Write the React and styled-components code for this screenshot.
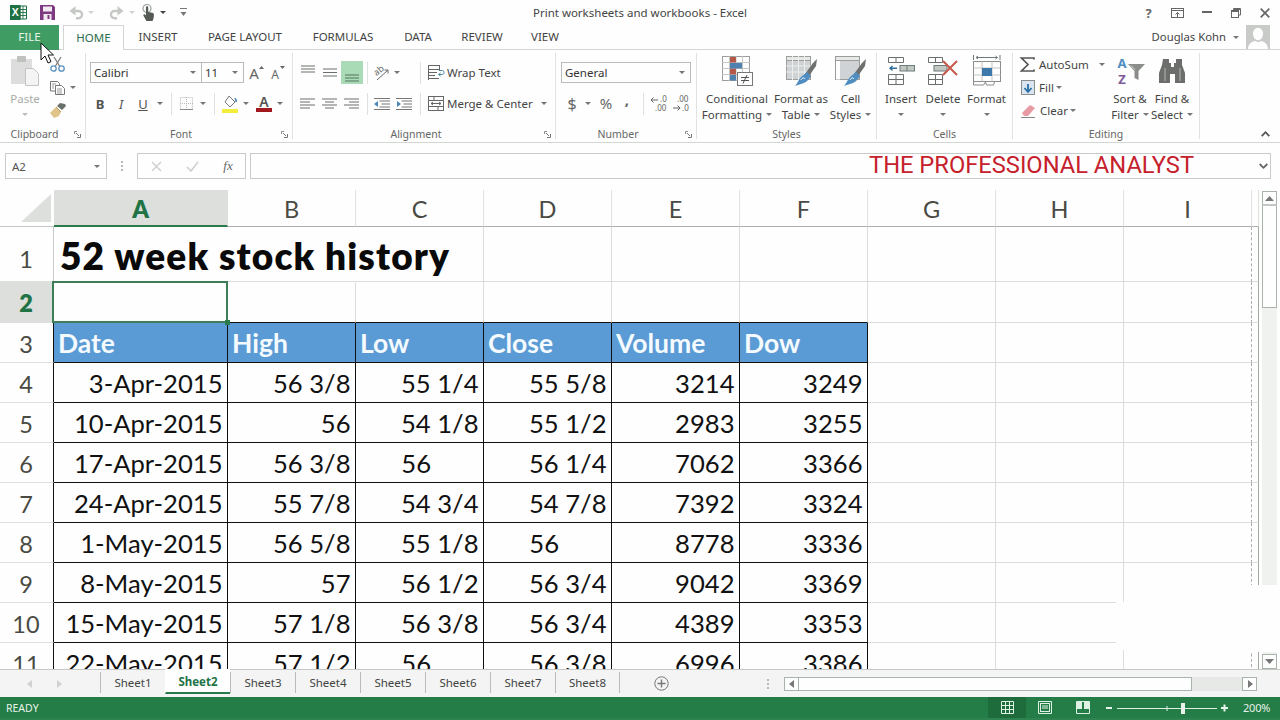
import React from 'react';
import styled, { createGlobalStyle } from 'styled-components';

const PAGE = '#fdfefd';
const UI = '"Noto Sans", "Open Sans", sans-serif';
const CELL = 'Lato, "Open Sans", sans-serif';

const Global = createGlobalStyle`
  html, body { margin: 0; padding: 0; background: ${PAGE}; }
  #root { width: 1280px; height: 720px; overflow: hidden; }
  * { box-sizing: border-box; }
`;

const Window = styled.div`
  position: relative;
  width: 1280px;
  height: 720px;
  display: flex;
  flex-direction: column;
  overflow: hidden;
  background: ${PAGE};
  color: #444;
  font-family: ${UI};
  font-size: 11.5px;
`;

/* ---------- shared bits ---------- */
const Svg = styled.svg`
  display: block;
  flex: none;
  overflow: visible;
`;
const Slot = styled.span`
  flex: none;
  display: flex;
  align-items: center;
  justify-content: center;
  width: ${(p) => p.$w}px;
  height: 100%;
`;
const Caret = styled.span`
  flex: none;
  display: inline-block;
  width: 0;
  height: 0;
  border-left: 3px solid transparent;
  border-right: 3px solid transparent;
  border-top: 3px solid ${(p) => p.$c || '#777'};
`;
const Sep = styled.span`
  flex: none;
  display: block;
  width: 1px;
  height: 22px;
  background: #dfe1df;
`;

/* ---------- title bar ---------- */
const TitleBar = styled.header`
  flex: none;
  height: 25px;
  display: flex;
  align-items: center;
`;
const Qat = styled.div`
  flex: none;
  width: 320px;
  height: 100%;
  display: flex;
  align-items: center;
  padding-left: 8px;
`;
const DocTitle = styled.div`
  flex: 1;
  text-align: center;
  font-size: 11.5px;
  color: #444;
  padding-bottom: 1px;
`;
const WinControls = styled.div`
  flex: none;
  width: 320px;
  height: 100%;
  display: flex;
  align-items: center;
  justify-content: flex-end;
`;
const Help = styled.span`
  font-weight: 700;
  font-size: 13px;
  color: #666;
`;

/* ---------- tabs ---------- */
const TabRow = styled.nav`
  flex: none;
  height: 25px;
  display: flex;
  align-items: stretch;
  border-bottom: 1px solid #d4d6d4;
`;
const FileTab = styled.div`
  flex: none;
  width: 59px;
  height: 25px;
  display: flex;
  align-items: center;
  justify-content: center;
  padding-bottom: 2px;
  background: #3f9c62;
  color: #e9f5ec;
  font-size: 11.5px;
`;
const RibbonTab = styled.div`
  flex: none;
  width: ${(p) => p.$w}px;
  height: ${(p) => (p.$active ? 25 : 24)}px;
  margin-left: ${(p) => p.$ml || 0}px;
  display: flex;
  align-items: center;
  justify-content: center;
  padding-bottom: 2px;
  font-size: 11.5px;
  color: ${(p) => (p.$active ? '#2f6f4e' : '#444')};
  background: ${PAGE};
  ${(p) => p.$active && 'border: 1px solid #d4d6d4; border-bottom: 0;'}
`;
const User = styled.div`
  margin-left: auto;
  display: flex;
  align-items: center;
  height: 24px;
  padding-right: 10px;
  font-size: 11.3px;
`;
const UserName = styled.span`
  margin-right: 7px;
  padding-bottom: 1px;
`;
const Avatar = styled.span`
  display: block;
  width: 24px;
  height: 24px;
  margin-left: 7px;
  background: #c9cbc9;
`;

/* ---------- ribbon ---------- */
const Ribbon = styled.section`
  flex: none;
  height: 93px;
  display: flex;
  align-items: flex-start;
  padding-top: 3px;
  border-bottom: 1px solid #d4d6d4;
`;
const Group = styled.div`
  flex: none;
  width: ${(p) => p.$w}px;
  height: 86px;
  display: flex;
  flex-direction: column;
  border-right: 1px solid #e1e3e1;
`;
const GroupBody = styled.div`
  flex: 1;
  min-height: 0;
  display: flex;
  align-items: flex-start;
`;
const GroupFoot = styled.div`
  flex: none;
  height: 12px;
  display: grid;
  grid-template-columns: 1fr auto 1fr;
  align-items: start;
  font-size: 10.5px;
  line-height: 14px;
  color: #666;
  padding-right: ${(p) => p.$pr || 0}px;
`;
const FootLabel = styled.span`
  grid-column: 2;
`;
const Launcher = styled.span`
  grid-column: 3;
  justify-self: end;
  display: block;
  margin-top: 4px;
  margin-right: ${(p) => p.$mr}px;
`;
const Rows = styled.div`
  display: flex;
  flex-direction: column;
  gap: 10px;
  padding-top: 9px;
  padding-left: ${(p) => p.$pl || 0}px;
`;
const Row = styled.div`
  display: flex;
  align-items: center;
  height: 21px;
`;
const Combo = styled.div`
  flex: none;
  width: ${(p) => p.$w}px;
  height: 21px;
  margin-left: ${(p) => p.$ml ?? 0}px;
  display: flex;
  align-items: center;
  justify-content: space-between;
  padding: 0 5px 0 3px;
  border: 1px solid #b9bdb9;
  background: ${PAGE};
  font-size: 11.5px;
  color: #333;
`;
const Letter = styled.span`
  font-family: ${UI};
  font-weight: ${(p) => (p.$b ? 700 : 400)};
  font-style: ${(p) => (p.$i ? 'italic' : 'normal')};
  text-decoration: ${(p) => (p.$u ? 'underline' : 'none')};
  font-size: 13px;
  color: #555;
`;
const ActiveAlign = styled.span`
  flex: none;
  width: 22px;
  height: 23px;
  display: flex;
  align-items: flex-end;
  justify-content: center;
  padding-bottom: 2px;
  background: #a9dcb6;
`;
const TextBtn = styled.span`
  flex: none;
  font-size: 11.5px;
  color: #444;
  margin-left: ${(p) => p.$ml || 0}px;
  width: ${(p) => (p.$w ? `${p.$w}px` : 'auto')};
`;
const Symbol = styled.span`
  font-size: ${(p) => p.$s || 15}px;
  font-weight: ${(p) => (p.$raise ? 700 : 400)};
  color: #666;
  line-height: 1;
  padding-bottom: ${(p) => (p.$raise ? 9 : 0)}px;
`;
const Big = styled.div`
  flex: none;
  width: ${(p) => p.$w}px;
  display: flex;
  flex-direction: column;
  align-items: center;
  white-space: nowrap;
  color: ${(p) => (p.$dim ? '#a9aca9' : '#444')};
`;
const BigIcon = styled.div`
  height: 37px;
  padding-bottom: 2px;
  display: flex;
  align-items: center;
  justify-content: center;
`;
const BigLine = styled.div`
  height: 16px;
  display: flex;
  align-items: center;
  justify-content: center;
  gap: 4px;
  font-size: 11.5px;
`;
const Mini = styled.div`
  flex: none;
  display: flex;
  flex-direction: column;
  width: ${(p) => p.$w}px;
`;
const MiniRow = styled.div`
  height: 23px;
  display: flex;
  align-items: center;
  padding-left: ${(p) => p.$pl || 0}px;
`;
const Collapse = styled.div`
  flex: none;
  width: 9px;
  height: 6px;
  margin-left: auto;
  margin-right: 10px;
  margin-top: 78px;
`;

/* ---------- formula bar ---------- */
const FormulaBar = styled.div`
  flex: none;
  height: 26px;
  margin-top: 10px;
  padding: 0 9px 0 5px;
  display: flex;
  align-items: stretch;
`;
const NameBox = styled.div`
  flex: none;
  width: 102px;
  display: flex;
  align-items: center;
  justify-content: space-between;
  padding: 0 6px;
  border: 1px solid #c8cbc8;
  font-size: 11.5px;
  color: #555;
`;
const Grip = styled.div`
  flex: none;
  width: 30px;
  display: flex;
  flex-direction: column;
  align-items: center;
  justify-content: center;
  gap: 2px;
`;
const GripDot = styled.span`
  width: 2px;
  height: 2px;
  background: #b5b8b5;
`;
const FxButtons = styled.div`
  flex: none;
  width: 109px;
  display: flex;
  align-items: center;
  border: 1px solid #c8cbc8;
`;
const FxText = styled.span`
  font-family: "Liberation Serif", serif;
  font-style: italic;
  font-size: 13px;
  color: #666;
`;
const FormulaInput = styled.div`
  flex: 1;
  margin-left: 4px;
  display: flex;
  align-items: center;
  justify-content: space-between;
  padding: 0 2px 0 618px;
  border: 1px solid #c8cbc8;
`;
const Brand = styled.span`
  font-family: Roboto, sans-serif;
  font-size: 23.7px;
  color: #c6202c;
  white-space: nowrap;
  padding-bottom: 2px;
`;

/* ---------- sheet ---------- */
const SheetArea = styled.div`
  flex: none;
  height: 479px;
  margin-top: 11px;
  display: flex;
`;
const Grid = styled.div`
  flex: none;
  width: 1259px;
  height: 479px;
  overflow: hidden;
  display: grid;
  grid-template-columns: 54px 174px repeat(8, 128px) 7px;
  grid-template-rows: 37px 55px 41px repeat(9, 40px);
  align-content: start;
`;
const Corner = styled.div`
  display: flex;
  align-items: flex-end;
  justify-content: flex-end;
  padding: 0 3px 4px 0;
  border-bottom: 1px solid #c3c7c3;
`;
const ColHead = styled.div`
  display: flex;
  align-items: center;
  justify-content: center;
  padding-top: 2px;
  font-family: ${CELL};
  font-size: 23.5px;
  color: ${(p) => (p.$on ? '#217346' : '#4a4a44')};
  font-weight: ${(p) => (p.$on ? 800 : 400)};
  background: ${(p) => (p.$on ? '#dcdfdc' : 'transparent')};
  border-right: 1px solid ${(p) => (p.$on ? '#dcdfdc' : '#dfe1df')};
  border-bottom: ${(p) => (p.$on ? '2px solid #2a7b4c' : '1px solid #aab0aa')};
`;
const RowHead = styled.div`
  display: flex;
  align-items: center;
  justify-content: center;
  padding-top: ${(p) => p.$pt ?? 2}px;
  padding-right: 1px;
  font-family: ${CELL};
  font-size: 23.5px;
  color: ${(p) => (p.$on ? '#217346' : '#4a4a44')};
  font-weight: ${(p) => (p.$on ? 800 : 400)};
  background: ${(p) => (p.$on ? '#dcdfdc' : 'transparent')};
  border-right: 1px solid ${(p) => (p.$table ? '#111' : p.$on ? '#2a7b4c' : '#c8cbc8')};
  border-bottom: 1px solid ${(p) => (p.$on ? '#dcdfdc' : '#dfe1df')};
`;
const rightBorder = (p) => {
  if (p.$open) return '1px solid transparent';
  if (p.$dash) return '1px dashed #a9ada9';
  if (p.$edge) return '1px solid #a3a8a3';
  return `1px solid ${p.$table ? '#111' : '#dcdedc'}`;
};
const Cell = styled.div`
  position: relative;
  display: flex;
  align-items: center;
  justify-content: ${(p) => (p.$left ? 'flex-start' : 'flex-end')};
  padding: ${(p) => (p.$left ? '0 0 0 5px' : `0 ${p.$pr || 4.5}px 0 0`)};
  font-family: ${CELL};
  font-size: 25.6px;
  color: #111;
  white-space: nowrap;
  border-right: ${rightBorder};
  border-bottom: 1px solid ${(p) => (p.$table || p.$above ? '#111' : '#dcdedc')};
`;
const HeaderCell = styled(Cell)`
  background: #5b9bd5;
  color: #f4fafd;
  font-weight: 700;
  font-size: 26.5px;
  padding-left: 4px;
`;
const TitleCell = styled(Cell)`
  font-weight: 800;
  font-size: 37px;
  color: #0a0a0a;
  letter-spacing: 1.15px;
  padding: 3px 0 0 6px;
`;
const Selection = styled.div`
  position: absolute;
  left: -2px;
  top: -1px;
  right: -1px;
  bottom: -1px;
  border: 2px solid #3d7d58;
  z-index: 2;
`;
const Handle = styled.span`
  position: absolute;
  right: -4px;
  bottom: -4px;
  width: 5px;
  height: 5px;
  background: #2a7b4c;
`;
const VScroll = styled.aside`
  flex: 1;
  display: flex;
  flex-direction: column;
  padding: 1px 3px 0 3px;
`;
const VBtn = styled.div`
  flex: none;
  height: ${(p) => p.$h}px;
  display: flex;
  align-items: center;
  justify-content: center;
  border: 1px solid #a9b3a9;
  ${(p) => (p.$top ? 'border-bottom: 2px solid #c3c7c3;' : '')}
`;
const VThumb = styled.div`
  flex: none;
  height: 102px;
  border: 1px solid #a9b3a9;
  border-top: 0;
  background: ${PAGE};
`;
const VTrack = styled.div`
  flex: 1;
  background: #f0f2f0;
`;

/* ---------- sheet tabs ---------- */
const Strip = styled.div`
  flex: none;
  height: 28px;
  display: flex;
  align-items: flex-start;
  background: #f3f4f3;
  border-top: 1px solid #c5c8c5;
`;
const StripNav = styled.div`
  flex: none;
  width: 100px;
  height: 100%;
  display: flex;
  align-items: center;
  padding-left: 27px;
  gap: 23px;
`;
const SheetTab = styled.div`
  flex: none;
  width: 65px;
  height: ${(p) => (p.$on ? 25 : 21)}px;
  margin-top: ${(p) => (p.$on ? -1 : 2)}px;
  padding-top: ${(p) => (p.$on ? 2 : 0)}px;
  display: flex;
  align-items: center;
  justify-content: center;
  font-size: 11.5px;
  color: ${(p) => (p.$on ? '#217346' : '#444')};
  font-weight: ${(p) => (p.$on ? 700 : 400)};
  background: ${(p) => (p.$on ? PAGE : 'transparent')};
  border-left: 1px solid ${(p) => (p.$on ? 'transparent' : '#b9bdb9')};
  border-bottom: ${(p) => (p.$on ? '2px solid #2a7b4c' : '0')};
  ${(p) => p.$last && 'border-right: 1px solid #b9bdb9;'}
`;
const PlusSlot = styled(Slot)`
  width: 82px;
`;
const StripGrip = styled.span`
  flex: none;
  width: 72px;
  height: 100%;
  display: flex;
  flex-direction: column;
  gap: 2px;
  align-items: flex-end;
  justify-content: center;
  padding-right: 5px;
`;
const HScroll = styled.div`
  flex: none;
  width: 473px;
  height: 14px;
  margin-top: 7px;
  margin-left: 10px;
  display: flex;
  align-items: stretch;
  background: #e7e9e7;
`;
const HBtn = styled.div`
  flex: none;
  width: 15px;
  display: flex;
  align-items: center;
  justify-content: center;
  background: ${PAGE};
  border: 1px solid #a9b3a9;
`;
const HThumb = styled.div`
  flex: none;
  width: 393px;
  background: ${PAGE};
  border: 1px solid #a9b3a9;
  border-left: 0;
`;
const HTrack = styled.div`
  flex: 1;
`;

/* ---------- status bar ---------- */
const Status = styled.footer`
  flex: none;
  height: 23px;
  display: flex;
  align-items: center;
  background: #247c46;
  color: #e6f2ea;
  font-size: 10.5px;
  padding-left: 6px;
  border-bottom: 2px solid #2e8350;
`;
const StatusText = styled.span`
  flex: none;
  width: 982px;
`;
const ViewBtn = styled.div`
  flex: none;
  width: ${(p) => p.$w}px;
  height: 100%;
  display: flex;
  align-items: center;
  justify-content: center;
  background: ${(p) => (p.$on ? '#1e6b3c' : 'transparent')};
`;
const Zoom = styled.div`
  flex: none;
  height: 100%;
  display: flex;
  align-items: center;
  margin-left: 4px;
`;
const Percent = styled.span`
  flex: none;
  margin-left: 15px;
  width: 37px;
  letter-spacing: -0.2px;
  font-size: 11px;
`;

/* ---------- overlays ---------- */
const Blotch = styled.div`
  position: absolute;
  left: ${(p) => p.$x}px;
  top: ${(p) => p.$y}px;
  width: ${(p) => p.$w}px;
  height: ${(p) => p.$h}px;
  background: ${PAGE};
  z-index: 3;
`;
const Pointer = styled.div`
  position: absolute;
  left: 40px;
  top: 42px;
  z-index: 5;
`;

/* ---------- icons ---------- */
const Lines = ({ ys, xs, c = '#6b6f6b', w = 16, h = 12 }) => (
  <Svg width={w} height={h} viewBox={`0 0 ${w} ${h}`}>
    {ys.map((y, i) => (
      <line key={i} x1={xs[i][0]} x2={xs[i][1]} y1={y} y2={y} stroke={c} strokeWidth="1" />
    ))}
  </Svg>
);
const LauncherIcon = () => (
  <Svg width="7" height="7" viewBox="0 0 7 7">
    <path d="M.5 3V.5H3" fill="none" stroke="#8a8d8a" />
    <path d="M2 2l3 3M6.500 3v3.500H3" fill="none" stroke="#777" />
  </Svg>
);
const Tri = ({ dir, c = '#777' }) => (
  <Svg width="6" height="8" viewBox="0 0 6 8">
    {dir === 'l' ? <path d="M5 0v8L0 4z" fill={c} /> : <path d="M1 0v8l5-4z" fill={c} />}
  </Svg>
);
const PlainCaretUp = ({ c = '#777' }) => (
  <Svg width="9" height="5" viewBox="0 0 9 5"><path d="M0 5l4.500-5L9 5z" fill={c} /></Svg>
);
const PlainCaretDown = ({ c = '#777' }) => (
  <Svg width="9" height="5" viewBox="0 0 9 5"><path d="M0 0l4.500 5L9 0z" fill={c} /></Svg>
);

const XlLogo = () => (
  <Svg width="17" height="17" viewBox="0 0 17 17">
    <path d="M7 2h9.500v13H7z" fill="#fff" stroke="#1e7145" />
    <path d="M10 2v13M13 2v13M7 5.500h9.500M7 8.500h9.500M7 11.500h9.500" stroke="#1e7145" strokeWidth=".9" />
    <rect x="0" y="1" width="10.500" height="15" fill="#1e7145" />
    <text x="5.200" y="12.200" fontFamily="Liberation Sans" fontWeight="700" fontSize="10.500" fill="#fff" textAnchor="middle">X</text>
  </Svg>
);
const SaveIcon = () => (
  <Svg width="15" height="15" viewBox="0 0 15 15">
    <path d="M0 0h13l2 2v13H0z" fill="#7e3a80" />
    <rect x="3" y="1.500" width="9" height="5" fill="#f2e9f2" />
    <rect x="3.500" y="9" width="8" height="6" fill="#f2e9f2" />
    <rect x="7.500" y="10" width="2" height="4" fill="#7e3a80" />
  </Svg>
);
const UndoIcon = ({ flip }) => (
  <Svg width="15" height="13" viewBox="0 0 15 13">
    <g transform={flip ? 'matrix(-1 0 0 1 15 0)' : undefined}>
      <path d="M3 5h6.500a3.600 3.600 0 0 1 0 7.200H7" fill="none" stroke="#c5c8c5" strokeWidth="2.400" />
      <path d="M6.500 0v9.500L.5 5z" fill="#c5c8c5" />
    </g>
  </Svg>
);
const TouchIcon = () => (
  <Svg width="13" height="18" viewBox="0 0 13 18">
    <circle cx="5" cy="4.500" r="4" fill="none" stroke="#9aa09a" strokeWidth="1.200" />
    <path d="M4 3.200c0-1.400 2.200-1.400 2.200 0V8l4 .8c1.300.3 1.700 1 1.700 2.200 0 2.400-.6 4.200-1.400 6H4.400L1.500 11.800c-.7-1.200.7-2.200 1.600-1.200L4 11.600z" fill="#555a55" />
  </Svg>
);
const QatMore = () => (
  <Svg width="7" height="9" viewBox="0 0 7 9">
    <path d="M0 .5h7" stroke="#777" />
    <path d="M.5 4h6L3.500 8z" fill="#777" />
  </Svg>
);
const RibbonOpts = () => (
  <Svg width="13" height="10" viewBox="0 0 13 10">
    <rect x=".5" y=".5" width="12" height="9" fill="none" stroke="#666" />
    <path d="M.5 2.500h12" stroke="#666" />
    <path d="M6.500 9V4.500M4.500 6.500l2-2 2 2" fill="none" stroke="#666" />
  </Svg>
);
const MinIcon = () => (
  <Svg width="10" height="3" viewBox="0 0 10 3"><rect y="0" width="10" height="2" fill="#666" /></Svg>
);
const RestoreIcon = () => (
  <Svg width="10" height="10" viewBox="0 0 10 10">
    <path d="M2.500 2.500V.5h7v6.500H7.500" fill="none" stroke="#666" />
    <rect x=".5" y="2.500" width="7" height="7" fill={PAGE} stroke="#666" />
    <path d="M.5 3.500h7M2.500 1.500h7" stroke="#666" />
  </Svg>
);
const CloseIcon = () => (
  <Svg width="10" height="10" viewBox="0 0 10 10">
    <path d="M.7.7l8.600 8.600M9.300.7L.7 9.300" stroke="#666" strokeWidth="1.700" />
  </Svg>
);
const AvatarArt = () => (
  <Svg width="24" height="24" viewBox="0 0 24 24">
    <ellipse cx="12" cy="9" rx="5" ry="6.200" fill={PAGE} />
    <path d="M2 24c0-5 4-7.500 7-8 2 1.400 4 1.400 6 0 3 .5 7 3 7 8z" fill={PAGE} />
  </Svg>
);
const PasteIcon = () => (
  <Svg width="29" height="30" viewBox="0 0 29 30">
    <rect x="0" y="3" width="21" height="25" fill="#dcdddc" />
    <rect x="6" y="0" width="9" height="6" rx="1" fill="#bfc1bf" />
    <path d="M14.500 12.500h8l5 5v12h-13z" fill="#f3f4f3" stroke="#c3c5c3" />
  </Svg>
);
const CutIcon = () => (
  <Svg width="15" height="15" viewBox="0 0 15 15">
    <path d="M4 0l5.500 9M11 0L5.500 9" stroke="#7b7e7b" strokeWidth="1.300" />
    <circle cx="3.500" cy="11.500" r="2.700" fill="none" stroke="#5a8ec0" strokeWidth="1.300" />
    <circle cx="11.500" cy="11.500" r="2.700" fill="none" stroke="#5a8ec0" strokeWidth="1.300" />
  </Svg>
);
const CopyIcon = () => (
  <Svg width="15" height="14" viewBox="0 0 15 14">
    <path d="M.5.500h7l2 2V10H.5z" fill={PAGE} stroke="#777" />
    <path d="M5.500 4.500h6l3 3v6h-9z" fill={PAGE} stroke="#777" />
    <path d="M2 3h4M2 5h2M2 7h2M7 8h5M7 10h5M7 12h5" stroke="#999" />
  </Svg>
);
const BrushIcon = () => (
  <Svg width="16" height="15" viewBox="0 0 16 15">
    <path d="M0 10l6-6 5 5-2 4-5 2z" fill="#e0c58a" />
    <path d="M7 3l3-3 5 1 1 2-3 3-1 1z" fill="#6b6f6b" />
    <path d="M6 4l5 5" stroke="#b6975c" />
  </Svg>
);
const GrowA = ({ big }) => (
  <Svg width="18" height="16" viewBox="0 0 18 16">
    <text x="7" y="14" textAnchor="middle" fontFamily={UI} fontSize={big ? 15 : 12} fill="#666">A</text>
    <path d={big ? 'M12 4l2.500-3L17 4z' : 'M12 1l2.500 3L17 1z'} fill="#666" />
  </Svg>
);
const BordersIcon = () => (
  <Svg width="13" height="13" viewBox="0 0 13 13">
    <rect x=".5" y=".5" width="12" height="12" fill="none" stroke="#bbb" strokeDasharray="1 1" />
    <path d="M6.500 0v13M0 6.500h13" stroke="#bbb" strokeDasharray="1 1" />
    <path d="M0 12.500h13" stroke="#888" />
  </Svg>
);
const FillIcon = () => (
  <Svg width="16" height="18" viewBox="0 0 16 18">
    <path d="M7 1l6 6-5 5-5-5z" fill={PAGE} stroke="#777" />
    <path d="M13 3c2 2 2 4 1 4z" fill="#4a86b8" stroke="#4a86b8" />
    <rect x="0" y="14" width="16" height="4" fill="#f3ee3d" />
  </Svg>
);
const ColorA = () => (
  <Svg width="16" height="17" viewBox="0 0 16 17">
    <text x="8" y="12" textAnchor="middle" fontFamily={UI} fontWeight="600" fontSize="14" fill="#555">A</text>
    <rect x="0" y="13" width="16" height="4" fill="#a3171f" />
  </Svg>
);
const Orient = () => (
  <Svg width="16" height="16" viewBox="0 0 16 16">
    <text x="0" y="9" fontFamily={UI} fontSize="9" fill="#666" transform="rotate(-40 4 8)">ab</text>
    <path d="M2 15L13 5M13 5h-3.500M13 5v3.500" fill="none" stroke="#666" />
  </Svg>
);
const Indent = ({ out }) => (
  <Svg width="16" height="12" viewBox="0 0 16 12">
    <path d="M5.500 3H16M7.500 6H16M5.500 9H16M0 .5h16M0 11.500h16" stroke="#777" />
    {out ? <path d="M0 6l4-3v6z" fill="#4a86b8" /> : <path d="M5 6L1 3v6z" fill="#4a86b8" />}
  </Svg>
);
const WrapIcon = () => (
  <Svg width="17" height="16" viewBox="0 0 17 16">
    <rect x=".5" y=".5" width="11" height="4" fill="none" stroke="#666" />
    <path d="M0 7.500h9M0 10.500h7M0 13.500h11M.5 5v10" stroke="#666" />
    <path d="M11 5.500h3.500c2 0 2 4 0 4H11M12.500 8l-2 1.500 2 1.500" fill="none" stroke="#4a86a0" />
  </Svg>
);
const MergeIcon = () => (
  <Svg width="16" height="15" viewBox="0 0 16 15">
    <rect x=".5" y=".5" width="15" height="14" fill="none" stroke="#666" />
    <path d="M.5 4.500h15M.5 10.500h15M6 .5v4M10 10.500v4" stroke="#666" />
    <path d="M3 7.500h10M3 7.500l2-1.500M3 7.500L5 9M13 7.500L11 6M13 7.500L11 9" fill="none" stroke="#666" />
  </Svg>
);
const Decimal = ({ inc }) => (
  <Svg width="18" height="16" viewBox="0 0 18 16" fontFamily={UI}>
    {inc ? (
      <>
        <path d="M8 4H1M3.500 1.500L1 4l2.500 2.500" fill="none" stroke="#666" />
        <text x="10" y="6" fontSize="8" fill="#666">.0</text>
        <text x="5" y="15" fontSize="8" fill="#666">.00</text>
      </>
    ) : (
      <>
        <text x="5" y="6" fontSize="8" fill="#666">.00</text>
        <path d="M1 12h7M5.500 9.500L8 12l-2.500 2.500" fill="none" stroke="#666" />
        <text x="10" y="15" fontSize="8" fill="#666">.0</text>
      </>
    )}
  </Svg>
);
const CondIcon = () => (
  <Svg width="31" height="30" viewBox="0 0 31 30">
    <rect x=".5" y=".5" width="27" height="24" fill={PAGE} stroke="#9a9d9a" />
    <path d="M7.500 0v25M20.500 0v25M14 0v25M0 6.500h28M0 12.500h28M0 18.500h28" stroke="#c3c5c3" />
    <rect x="8" y="1" width="6" height="5.500" fill="#b5584c" />
    <rect x="8" y="7" width="6" height="5.500" fill="#b5584c" />
    <rect x="8" y="7" width="12" height="5.500" fill="#4f81b0" />
    <rect x="8" y="13" width="6" height="5.500" fill="#b5584c" />
    <rect x="8" y="19" width="6" height="5.500" fill="#4f81b0" />
    <rect x="15.500" y="16.500" width="15" height="13" fill={PAGE} stroke="#777" />
    <path d="M19 21.500h8M19 24.500h8M25 19l-4 8.500" stroke="#555" />
  </Svg>
);
const TableIcon = ({ cell }) => (
  <Svg width="31" height="30" viewBox="0 0 31 30">
    <rect x=".5" y=".5" width="24" height="23" fill="#cfd3d6" stroke="#9a9d9a" />
    <rect x=".5" y=".5" width="24" height="4" fill="#e7e9e7" stroke="#9a9d9a" />
    {!cell && <path d="M6.500 0v24M12.500 0v24M18.500 0v24M0 10h25M0 16h25" stroke="#eceeec" />}
    {cell && <rect x="1" y="5" width="4" height="18.500" fill={PAGE} />}
    <path d="M19 18L27 7l4-4-1 7-7 10z" fill="#6d706d" />
    <path d="M21 16l4 4-3 4c-2 3-8 4-13 6 2-2 4-7 6-9 2-2 4-3 6-5z" fill="#4f8dc0" />
    <path d="M15 24c1-2 3-3 4-1" fill="none" stroke="#fff" />
  </Svg>
);
const InsertIcon = () => (
  <Svg width="27" height="28" viewBox="0 0 27 28">
    <path d="M.5.500h15v5h-15zM8 .5v5M.5 17.500h15v10H.5zM8 17.500v10M.5 22.500h15" fill="none" stroke="#6b6f6b" />
    <rect x="12" y="8.500" width="14.500" height="5.500" fill="#c3c7c3" stroke="#6b7b7b" />
    <path d="M19 8.500v5.500" stroke="#6b7b7b" />
    <path d="M9 11.300H2M4.500 9L2 11.300 4.500 13.500" fill="none" stroke="#2f6f9a" strokeWidth="1.400" />
  </Svg>
);
const DeleteIcon = () => (
  <Svg width="30" height="28" viewBox="0 0 30 28">
    <path d="M.5.500h14v5H.5zM7.500.5v5M.5 17.500h14v10H.5zM7.500 17.500v10M.5 22.500h14" fill="none" stroke="#6b6f6b" />
    <rect x="6" y="8.500" width="13" height="5.500" fill="#c3c7c3" stroke="#6b7b7b" />
    <path d="M15 4l14 14M29 4L15 18" stroke="#c6584c" strokeWidth="2" />
  </Svg>
);
const FormatIcon = () => (
  <Svg width="28" height="31" viewBox="0 0 28 31">
    <path d="M.5 0v5M27 0v5M3 2.500h21.500M3 2.500l2-1.500M3 2.500L5 4M24.500 2.500l-2-1.500M24.500 2.500l-2 1.500" fill="none" stroke="#6b7b7b" />
    <rect x=".5" y="6.500" width="27" height="20" fill={PAGE} stroke="#8a8d8a" />
    <path d="M9 6.500v20M19 6.500v20M.5 13h27M.5 20h27" stroke="#c3c5c3" />
    <rect x="9" y="13" width="10" height="8" fill="#3e78ab" />
    <path d="M.5 27v3h10l2-3M12.500 27l1 3h7l1-3" fill="none" stroke="#8a8d8a" />
  </Svg>
);
const Sigma = () => (
  <Svg width="15" height="15" viewBox="0 0 15 15">
    <path d="M14 2.500V1H1.500L8 7.500 1.500 14H14v-1.500" fill="none" stroke="#555" strokeWidth="1.700" />
  </Svg>
);
const FillDown = () => (
  <Svg width="14" height="15" viewBox="0 0 14 15">
    <rect x=".5" y=".5" width="13" height="14" fill="#d9e6f1" stroke="#8a8d8a" />
    <path d="M7 4v8M3.500 8L7 12l3.500-4" fill="none" stroke="#2a6ea5" strokeWidth="1.800" />
  </Svg>
);
const Eraser = () => (
  <Svg width="15" height="14" viewBox="0 0 15 14">
    <path d="M1 9l8-8 5 3-7 8H3z" fill="#e79aa3" />
    <path d="M0 13.500h14" stroke="#888" />
  </Svg>
);
const SortIcon = () => (
  <Svg width="30" height="28" viewBox="0 0 30 28">
    <text x="7" y="11" textAnchor="middle" fontFamily={UI} fontWeight="700" fontSize="13" fill="#4f8dc0">A</text>
    <text x="7" y="27" textAnchor="middle" fontFamily={UI} fontWeight="700" fontSize="13" fill="#7f5a9a">Z</text>
    <path d="M13 7h17l-6.500 7v9l-4-2v-7z" fill="#8a8d8a" />
    <path d="M16 8.500l4 4" stroke="#d5d7d5" />
  </Svg>
);
const Binoculars = () => (
  <Svg width="27" height="24" viewBox="0 0 27 24">
    <path d="M4 0h6v4h2v4h3V4h2V0h6v6l3 8v10H16V15h-5v9H0V14l3-8z" fill="#6b6e6b" />
    <path d="M6 9v13M21 9v13" stroke="#8f928f" strokeWidth="2" />
  </Svg>
);
const XMark = () => (
  <Svg width="11" height="11" viewBox="0 0 11 11"><path d="M1 1l9 9M10 1l-9 9" stroke="#cfd2cf" strokeWidth="1.500" /></Svg>
);
const CheckMark = () => (
  <Svg width="13" height="11" viewBox="0 0 13 11"><path d="M1 6l4 4 7-9" fill="none" stroke="#cfd2cf" strokeWidth="1.700" /></Svg>
);
const Chevron = ({ up, c = '#666' }) => (
  <Svg width="9" height="6" viewBox="0 0 9 6">
    <path d={up ? 'M.7 5.200L4.500 1.200 8.300 5.200' : 'M.7 1l3.800 3.800L8.300 1'} fill="none" stroke={c} strokeWidth="1.800" />
  </Svg>
);
const Cursor = () => (
  <Svg width="14" height="22" viewBox="0 0 14 22">
    <path d="M1 1v17l4-4 3 7 3-1.300-3-6.700h5.500z" fill="#fff" stroke="#111" strokeWidth="1" />
  </Svg>
);
const PlusCircle = () => (
  <Svg width="15" height="15" viewBox="0 0 15 15">
    <circle cx="7.500" cy="7.500" r="6.700" fill="none" stroke="#777" />
    <path d="M7.500 3.500v8M3.500 7.500h8" stroke="#777" strokeWidth="1.400" />
  </Svg>
);
const ViewNormal = () => (
  <Svg width="13" height="13" viewBox="0 0 13 13">
    <path d="M.5.500h12v12H.5zM4.500.5v12M8.500.5v12M.5 4.500h12M.5 8.500h12" fill="none" stroke="#dff0e5" />
  </Svg>
);
const ViewPage = () => (
  <Svg width="14" height="13" viewBox="0 0 14 13">
    <path d="M.5.500h13v12H.5z" fill="none" stroke="#dff0e5" />
    <rect x="2.500" y="2.500" width="9" height="8" fill="none" stroke="#dff0e5" />
    <path d="M4 5h6M4 7h6" stroke="#dff0e5" />
  </Svg>
);
const ViewBreak = () => (
  <Svg width="14" height="13" viewBox="0 0 14 13">
    <path d="M.5.500h13v12H.5z" fill="none" stroke="#dff0e5" />
    <rect x="1" y="1" width="5" height="7" fill="#dff0e5" />
    <rect x="8" y="1" width="5" height="7" fill="#dff0e5" />
  </Svg>
);
const ZoomBar = () => (
  <Svg width="122" height="14" viewBox="0 0 122 14">
    <rect x="0" y="6" width="6" height="2" fill="#e6f2ea" />
    <path d="M11 7.500h100M61 5v5" stroke="#dff0e5" />
    <rect x="75" y="2" width="4" height="11" fill="#e6f2ea" />
    <path d="M115 7h7M118.500 3.500v7" stroke="#e6f2ea" strokeWidth="2" />
  </Svg>
);

/* ---------- data ---------- */
const COLS = ['A', 'B', 'C', 'D', 'E', 'F', 'G', 'H', 'I'];
const HEAD = ['Date', 'High', 'Low', 'Close', 'Volume', 'Dow'];
const DATA = [
  ['3-Apr-2015', '56 3/8', '55 1/4', '55 5/8', '3214', '3249'],
  ['10-Apr-2015', '56', '54 1/8', '55 1/2', '2983', '3255'],
  ['17-Apr-2015', '56 3/8', '~56', '56 1/4', '7062', '3366'],
  ['24-Apr-2015', '55 7/8', '54 3/4', '54 7/8', '7392', '3324'],
  ['1-May-2015', '56 5/8', '55 1/8', '~56', '8778', '3336'],
  ['8-May-2015', '57', '56 1/2', '56 3/4', '9042', '3369'],
  ['15-May-2015', '57 1/8', '56 3/8', '56 3/4', '4389', '3353'],
  ['22-May-2015', '57 1/2', '~56', '56 3/8', '6996', '3386'],
];
const SHEETS = ['Sheet1', 'Sheet2', 'Sheet3', 'Sheet4', 'Sheet5', 'Sheet6', 'Sheet7', 'Sheet8'];

const Blank = ({ n }) => (
  <>
    {Array.from({ length: n }).map((_, i) => (
      <Cell key={i} $dash={i === n - 1} />
    ))}
    <Cell $edge />
  </>
);

function Sheet() {
  return (
    <SheetArea>
      <Grid>
        <Corner>
          <Svg width="30" height="28" viewBox="0 0 30 28"><path d="M30 0v28H0z" fill="#dcdfdc" /></Svg>
        </Corner>
        {COLS.map((c) => (
          <ColHead key={c} $on={c === 'A'}>{c}</ColHead>
        ))}
        <ColHead />

        <RowHead $pt={10}>1</RowHead>
        <TitleCell $left $open>52 week stock history</TitleCell>
        <Cell $open />
        <Blank n={7} />

        <RowHead $on>2</RowHead>
        <Cell $above><Selection><Handle /></Selection></Cell>
        {[0, 1, 2, 3, 4].map((i) => <Cell key={i} $above />)}
        <Blank n={3} />

        <RowHead $table>3</RowHead>
        {HEAD.map((h) => <HeaderCell key={h} $table $left>{h}</HeaderCell>)}
        <Blank n={3} />

        {DATA.map((r, i) => (
          <React.Fragment key={r[0]}>
            <RowHead $table>{i + 4}</RowHead>
            {r.map((v, j) =>
              v[0] === '~'
                ? <Cell key={j} $table $pr={52}>{v.slice(1)}</Cell>
                : <Cell key={j} $table>{v}</Cell>
            )}
            <Blank n={3} />
          </React.Fragment>
        ))}
      </Grid>
      <VScroll>
        <VBtn $h={15} $top><PlainCaretUp /></VBtn>
        <VThumb />
        <VTrack />
        <VBtn $h={15}><PlainCaretDown /></VBtn>
      </VScroll>
    </SheetArea>
  );
}

const BigBtn = ({ w, icon, a, b, caret, dim }) => (
  <Big $w={w} $dim={dim}>
    <BigIcon>{icon}</BigIcon>
    <BigLine>{a}</BigLine>
    <BigLine>
      {b}
      {caret && <Caret />}
    </BigLine>
  </Big>
);

export default function App() {
  return (
    <Window>
      <Global />
      <TitleBar>
        <Qat>
          <Slot $w={20}><XlLogo /></Slot>
          <Slot $w={38}><SaveIcon /></Slot>
          <Slot $w={20}><UndoIcon /></Slot>
          <Slot $w={10}><Caret $c="#cfd2cf" /></Slot>
          <Slot $w={8} />
          <Slot $w={24}><UndoIcon flip /></Slot>
          <Slot $w={8}><Caret $c="#cfd2cf" /></Slot>
          <Slot $w={24}><TouchIcon /></Slot>
          <Slot $w={6}><Caret $c="#444" /></Slot>
          <Slot $w={34}><QatMore /></Slot>
        </Qat>
        <DocTitle>Print worksheets and workbooks - Excel</DocTitle>
        <WinControls>
          <Slot $w={29}><Help>?</Help></Slot>
          <Slot $w={29}><RibbonOpts /></Slot>
          <Slot $w={29}><MinIcon /></Slot>
          <Slot $w={29}><RestoreIcon /></Slot>
          <Slot $w={30}><CloseIcon /></Slot>
        </WinControls>
      </TitleBar>

      <TabRow>
        <FileTab>FILE</FileTab>
        <RibbonTab $w={61} $ml={4} $active>HOME</RibbonTab>
        <RibbonTab $w={68}>INSERT</RibbonTab>
        <RibbonTab $w={106}>PAGE LAYOUT</RibbonTab>
        <RibbonTab $w={90}>FORMULAS</RibbonTab>
        <RibbonTab $w={60}>DATA</RibbonTab>
        <RibbonTab $w={68}>REVIEW</RibbonTab>
        <RibbonTab $w={58}>VIEW</RibbonTab>
        <User>
          <UserName>Douglas Kohn</UserName>
          <Caret />
          <Avatar><AvatarArt /></Avatar>
        </User>
      </TabRow>

      <Ribbon>
        <Group $w={86}>
          <GroupBody>
            <Big $w={50} $dim>
              <BigIcon><PasteIcon /></BigIcon>
              <BigLine>Paste</BigLine>
              <BigLine><Caret $c="#bbb" /></BigLine>
            </Big>
            <Mini $w={35}>
              <MiniRow><CutIcon /></MiniRow>
              <MiniRow><CopyIcon /><Slot $w={16}><Caret /></Slot></MiniRow>
              <MiniRow><BrushIcon /></MiniRow>
            </Mini>
          </GroupBody>
          <GroupFoot $pr={16}>
            <FootLabel>Clipboard</FootLabel>
            <Launcher $mr={-12}><LauncherIcon /></Launcher>
          </GroupFoot>
        </Group>

        <Group $w={207}>
          <GroupBody>
            <Rows $pl={4}>
              <Row>
                <Combo $w={112}>Calibri<Caret /></Combo>
                <Combo $w={43} $ml={-1}>11<Caret /></Combo>
                <Slot $w={24}><GrowA big /></Slot>
                <Slot $w={18}><GrowA /></Slot>
              </Row>
              <Row>
                <Slot $w={20}><Letter $b>B</Letter></Slot>
                <Slot $w={22}><Letter $i>I</Letter></Slot>
                <Slot $w={22}><Letter $u>U</Letter></Slot>
                <Slot $w={12}><Caret /></Slot>
                <Slot $w={10}><Sep /></Slot>
                <Slot $w={20}><BordersIcon /></Slot>
                <Slot $w={14}><Caret /></Slot>
                <Slot $w={8}><Sep /></Slot>
                <Slot $w={24}><FillIcon /></Slot>
                <Slot $w={8}><Caret /></Slot>
                <Slot $w={28}><ColorA /></Slot>
                <Slot $w={4}><Caret /></Slot>
              </Row>
            </Rows>
          </GroupBody>
          <GroupFoot $pr={16}>
            <FootLabel>Font</FootLabel>
            <Launcher $mr={-12}><LauncherIcon /></Launcher>
          </GroupFoot>
        </Group>

        <Group $w={263}>
          <GroupBody>
            <Rows $pl={4}>
              <Row>
                <Slot $w={22}><Lines ys={[1, 4, 7]} xs={[[1, 15], [1, 15], [1, 15]]} h={16} /></Slot>
                <Slot $w={22}><Lines ys={[4, 7.5, 11]} xs={[[1, 15], [1, 15], [1, 15]]} h={16} /></Slot>
                <ActiveAlign><Lines ys={[5, 8, 11]} xs={[[1, 15], [1, 15], [1, 15]]} c="#55705f" h={12} /></ActiveAlign>
                <Slot $w={8}><Sep /></Slot>
                <Slot $w={24}><Orient /></Slot>
                <Slot $w={4}><Caret /></Slot>
                <Slot $w={12} />
                <Slot $w={18}><Sep /></Slot>
                <Slot $w={14}><WrapIcon /></Slot>
                <TextBtn $ml={4}>Wrap Text</TextBtn>
              </Row>
              <Row>
                <Slot $w={22}><Lines ys={[1, 4, 7, 10]} xs={[[0, 15], [0, 10], [0, 15], [0, 10]]} /></Slot>
                <Slot $w={22}><Lines ys={[1, 4, 7, 10]} xs={[[0, 15], [3, 12], [0, 15], [3, 12]]} /></Slot>
                <Slot $w={22}><Lines ys={[1, 4, 7, 10]} xs={[[0, 15], [5, 15], [0, 15], [5, 15]]} /></Slot>
                <Slot $w={8}><Sep /></Slot>
                <Slot $w={22}><Indent out /></Slot>
                <Slot $w={22}><Indent /></Slot>
                <Slot $w={10}><Sep /></Slot>
                <Slot $w={22}><MergeIcon /></Slot>
                <TextBtn $w={94}>Merge &amp; Center</TextBtn>
                <Caret />
              </Row>
            </Rows>
          </GroupBody>
          <GroupFoot $pr={16}>
            <FootLabel>Alignment</FootLabel>
            <Launcher $mr={-12}><LauncherIcon /></Launcher>
          </GroupFoot>
        </Group>

        <Group $w={141}>
          <GroupBody>
            <Rows $pl={5}>
              <Row>
                <Combo $w={130}>General<Caret /></Combo>
              </Row>
              <Row>
                <Slot $w={22}><Symbol $s={16}>$</Symbol></Slot>
                <Slot $w={10}><Caret /></Slot>
                <Slot $w={26}><Symbol $s={15}>%</Symbol></Slot>
                <Slot $w={16}><Symbol $s={15} $raise>,</Symbol></Slot>
                <Slot $w={16}><Sep /></Slot>
                <Slot $w={15}><Decimal inc /></Slot>
                <Slot $w={30}><Decimal /></Slot>
              </Row>
            </Rows>
          </GroupBody>
          <GroupFoot $pr={16}>
            <FootLabel>Number</FootLabel>
            <Launcher $mr={-12}><LauncherIcon /></Launcher>
          </GroupFoot>
        </Group>

        <Group $w={180}>
          <GroupBody>
            <BigBtn w={80} icon={<CondIcon />} a="Conditional" b="Formatting" caret />
            <BigBtn w={48} icon={<TableIcon />} a="Format as" b="Table" caret />
            <BigBtn w={51} icon={<TableIcon cell />} a="Cell" b="Styles" caret />
          </GroupBody>
          <GroupFoot><FootLabel>Styles</FootLabel></GroupFoot>
        </Group>

        <Group $w={136}>
          <GroupBody>
            <BigBtn w={48} icon={<InsertIcon />} a="Insert" caret />
            <BigBtn w={36} icon={<DeleteIcon />} a="Delete" caret />
            <BigBtn w={51} icon={<FormatIcon />} a="Format" caret />
          </GroupBody>
          <GroupFoot><FootLabel>Cells</FootLabel></GroupFoot>
        </Group>

        <Group $w={187}>
          <GroupBody>
            <Mini $w={96}>
              <MiniRow $pl={7}>
                <Sigma /><TextBtn $ml={4} $w={60}>AutoSum</TextBtn><Caret />
              </MiniRow>
              <MiniRow $pl={8}><FillDown /><TextBtn $ml={4}>Fill</TextBtn><Slot $w={10}><Caret /></Slot></MiniRow>
              <MiniRow $pl={8}><Eraser /><TextBtn $ml={4}>Clear</TextBtn><Slot $w={10}><Caret /></Slot></MiniRow>
            </Mini>
            <BigBtn w={42} icon={<SortIcon />} a="Sort &" b="Filter" caret />
            <BigBtn w={42} icon={<Binoculars />} a="Find &" b="Select" caret />
          </GroupBody>
          <GroupFoot><FootLabel>Editing</FootLabel></GroupFoot>
        </Group>

        <Collapse><Chevron up c="#555" /></Collapse>
      </Ribbon>

      <FormulaBar>
        <NameBox>A2<Caret /></NameBox>
        <Grip><GripDot /><GripDot /><GripDot /></Grip>
        <FxButtons>
          <Slot $w={36}><XMark /></Slot>
          <Slot $w={36}><CheckMark /></Slot>
          <Slot $w={36}><FxText>fx</FxText></Slot>
        </FxButtons>
        <FormulaInput>
          <Brand>THE PROFESSIONAL ANALYST</Brand>
          <Chevron />
        </FormulaInput>
      </FormulaBar>

      <Sheet />

      <Strip>
        <StripNav><Tri dir="l" c="#cfd2cf" /><Tri c="#cfd2cf" /></StripNav>
        {SHEETS.map((s, i) => (
          <SheetTab key={s} $on={i === 1} $last={i === SHEETS.length - 1}>{s}</SheetTab>
        ))}
        <PlusSlot><PlusCircle /></PlusSlot>
        <StripGrip><GripDot /><GripDot /><GripDot /></StripGrip>
        <HScroll>
          <HBtn><Tri dir="l" c="#777" /></HBtn>
          <HThumb />
          <HTrack />
          <HBtn><Tri c="#777" /></HBtn>
        </HScroll>
      </Strip>

      <Status>
        <StatusText>READY</StatusText>
        <ViewBtn $w={38} $on><ViewNormal /></ViewBtn>
        <ViewBtn $w={38}><ViewPage /></ViewBtn>
        <ViewBtn $w={38}><ViewBreak /></ViewBtn>
        <Zoom><ZoomBar /></Zoom>
        <Percent>200%</Percent>
      </Status>

      <Blotch $x={1124} $y={585} $w={156} $h={67} />
      <Blotch $x={1116} $y={602} $w={8} $h={48} />
      <Pointer><Cursor /></Pointer>
    </Window>
  );
}
